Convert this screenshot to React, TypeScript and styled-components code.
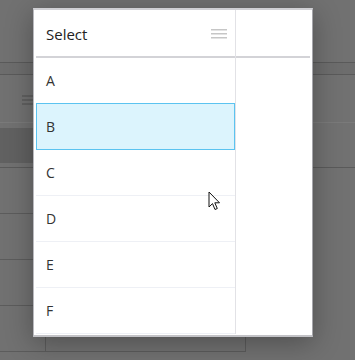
import React from "react";
import styled, { createGlobalStyle } from "styled-components";

const GlobalStyle = createGlobalStyle`
  html, body { margin: 0; padding: 0; }
  body { font-family: "Open Sans", "Noto Sans", sans-serif; }
  * { box-sizing: border-box; }
`;

const Page = styled.div`
  position: relative;
  width: 355px;
  height: 360px;
  overflow: hidden;
  background: #717171;
  display: flex;
  flex-direction: column;
`;

const TopArea = styled.div`
  height: 62px;
  flex: none;
`;

const TabStrip = styled.div`
  height: 13px;
  flex: none;
  background: #6d6d6d;
  border-top: 1px solid #5a5a5a;
  border-bottom: 1px solid #5a5a5a;
`;

const Toolbar = styled.div`
  height: 47px;
  flex: none;
  display: flex;
  align-items: flex-start;
  padding: 20px 0 0 22px;
`;

const TableHeader = styled.div`
  height: 46px;
  flex: none;
  border-top: 1px solid #7a7a7a;
  border-bottom: 1px solid #5a5a5a;
  padding: 5px 0 4px;
  display: flex;
`;

const HeaderBand = styled.div`
  width: 60px;
  background: #616161;
`;

const Table = styled.div`
  width: 246px;
  display: grid;
  grid-template-columns: 46px 200px;
`;

const Cell = styled.div`
  height: 46px;
  border-bottom: 1px solid #5c5c5c;
  border-right: 1px solid #5c5c5c;
`;

const Dialog = styled.div`
  position: absolute;
  left: 33px;
  top: 8px;
  width: 280px;
  height: 329px;
  background: #ffffff;
  border: 1px solid #b9b9be;
  border-top: 2px solid #d0d0d4;
  border-bottom: 2px solid #c2c2c6;
  border-right-color: #a5a5aa;
  padding: 0 2px 1px 2px;
  display: flex;
  box-shadow: 0 6px 26px rgba(0, 0, 0, 0.3);
`;

const ListColumn = styled.div`
  width: 200px;
  flex: none;
  border-right: 1px solid #e2e2e6;
  display: flex;
  flex-direction: column;
`;

const SideColumn = styled.div`
  flex: 1;
  display: flex;
  flex-direction: column;
`;

const ColumnHeader = styled.div`
  height: 48px;
  flex: none;
  border-bottom: 2px solid #d3d3d7;
  display: flex;
  align-items: center;
  justify-content: space-between;
  padding: 2px 8px 0 10px;
`;

const Title = styled.span`
  font-size: 15px;
  color: #222222;
  font-weight: 500;
`;

const MenuIcon = styled.svg`
  display: block;
  margin-top: -1px;
`;

const Row = styled.div<{ $selected?: boolean }>`
  height: 46px;
  flex: none;
  display: flex;
  align-items: center;
  padding-left: 10px;
  font-size: 14px;
  color: #333333;
  border-bottom: 1px solid #eef0f5;
  ${(p) =>
    p.$selected
      ? `
    background: #dcf4fd;
    border: 1px solid #5bc3f0;
    margin-top: -1px;
    height: 47px;
    padding-left: 9px;
  `
      : ""}
`;

const Cursor = styled.svg`
  position: absolute;
  left: 208px;
  top: 191px;
  pointer-events: none;
`;

const items = ["A", "B", "C", "D", "E", "F"];

export default function App() {
  return (
    <>
      <GlobalStyle />
      <Page>
        <TopArea />
        <TabStrip />
        <Toolbar>
          <svg width="20" height="10" viewBox="0 0 20 10">
            <g stroke="#5a5a5a" strokeWidth="1.4">
              <line x1="0" y1="1" x2="20" y2="1" />
              <line x1="0" y1="5" x2="20" y2="5" />
              <line x1="0" y1="9" x2="20" y2="9" />
            </g>
          </svg>
        </Toolbar>
        <TableHeader>
          <HeaderBand />
        </TableHeader>
        <Table>
          {Array.from({ length: 8 }).map((_, i) => (
            <Cell key={i} />
          ))}
        </Table>
        <Dialog>
          <ListColumn>
            <ColumnHeader>
              <Title>Select</Title>
              <MenuIcon width="16" height="10" viewBox="0 0 16 10">
                <g stroke="#c6c6c6" strokeWidth="1.5">
                  <line x1="0" y1="0.75" x2="16" y2="0.75" />
                  <line x1="0" y1="4.75" x2="16" y2="4.75" />
                  <line x1="0" y1="8.75" x2="16" y2="8.75" />
                </g>
              </MenuIcon>
            </ColumnHeader>
            {items.map((it) => (
              <Row key={it} $selected={it === "B"}>
                {it}
              </Row>
            ))}
          </ListColumn>
          <SideColumn>
            <ColumnHeader />
          </SideColumn>
        </Dialog>
        <Cursor width="13" height="20" viewBox="0 0 13 20">
          <path
            d="M1 1 L1 16 L4.5 12.6 L7 18.5 L9.3 17.5 L6.8 11.8 L11.5 11.8 Z"
            fill="#ffffff"
            stroke="#111111"
            strokeWidth="1"
            strokeLinejoin="miter"
          />
        </Cursor>
      </Page>
    </>
  );
}
